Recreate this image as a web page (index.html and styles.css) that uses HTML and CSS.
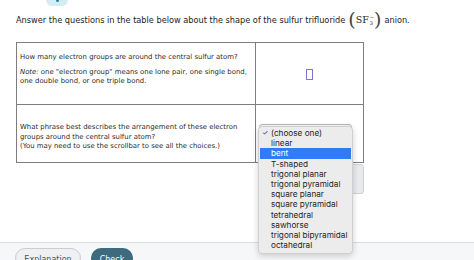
FILE: index.html
```html
<!DOCTYPE html>
<html lang="en">

<head>
    <meta charset="UTF-8">
    <title>Electron groups</title>
    <link rel="stylesheet" href="styles.css">
</head>

<body>
    <div class="tab"><span class="dot"></span></div>

    <main>
        <p class="question">Answer the questions in the table below about the shape of the sulfur trifluoride
            <span class="formula"><span class="paren">(</span>SF<span class="sub-sup"><sup>&minus;</sup><sub>3</sub></span><span class="paren">)</span></span>
            anion.</p>

        <table class="qtable">
            <tr class="row-one">
                <td class="ask">
                    <p>How many electron groups are around the central sulfur atom?</p>
                    <p class="note"><em>Note:</em> one "electron group" means one lone pair, one single bond, one double bond, or one triple bond.</p>
                </td>
                <td class="answer"><span class="input-box"></span></td>
            </tr>
            <tr class="row-two">
                <td class="ask">
                    <p>What phrase best describes the arrangement of these electron groups around the central sulfur atom?<br>(You may need to use the scrollbar to see all the choices.)</p>
                </td>
                <td class="answer select-cell">
                    <div class="select"><span class="arrows">&#8597;</span></div>
                    <ul class="popup">
                        <li class="checked">(choose one)</li>
                        <li>linear</li>
                        <li class="active">bent</li>
                        <li>T-shaped</li>
                        <li>trigonal planar</li>
                        <li>trigonal pyramidal</li>
                        <li>square planar</li>
                        <li>square pyramidal</li>
                        <li>tetrahedral</li>
                        <li>sawhorse</li>
                        <li>trigonal bipyramidal</li>
                        <li>octahedral</li>
                    </ul>
                </td>
            </tr>
        </table>

        <div class="tools"><div class="tool-box"></div></div>
    </main>

    <footer>
        <button class="btn explain">Explanation</button>
        <button class="btn check">Check</button>
    </footer>
</body>

</html>
```

FILE: styles.css
```css
* {
    margin: 0;
    padding: 0;
    box-sizing: border-box;
}

body {
    width: 474px;
    height: 260px;
    overflow: hidden;
    background-color: white;
    font-family: "DejaVu Sans", Verdana, sans-serif;
    color: #2b2b2b;
    position: relative;
}

.tab {
    position: absolute;
    left: 46px;
    top: -6px;
    width: 22px;
    height: 12px;
    border-radius: 6px;
    background-color: #d6ecf3;
    display: flex;
    justify-content: center;
    align-items: flex-end;
    padding-bottom: 4px;
}

.tab .dot {
    width: 3px;
    height: 3px;
    border-radius: 50%;
    background-color: #2c8aa8;
}

main {
    height: 242px;
    padding: 10px 0 0 16px;
}

.question {
    font-size: 8.2px;
    display: flex;
    align-items: center;
    gap: 3px;
    height: 19px;
    white-space: nowrap;
    color: #222;
}

.formula {
    font-family: "DejaVu Serif", "Liberation Serif", serif;
    font-size: 9.5px;
    display: inline-flex;
    align-items: center;
}

.formula .paren {
    font-size: 19px;
    font-weight: 300;
    color: #444;
    line-height: 1;
}

.sub-sup {
    display: inline-flex;
    flex-direction: column;
    font-size: 6px;
    line-height: 6px;
    margin-left: 1px;
}

.qtable {
    margin-top: 13px;
    border-collapse: collapse;
    width: 348px;
    font-size: 6.9px;
}

.qtable td {
    border: 1px solid #7d7d7d;
    vertical-align: top;
}

.row-one td {
    height: 62px;
}

.row-two td {
    height: 58px;
}

.ask {
    width: 239px;
    padding: 10px 6px 0 3px;
    line-height: 9.5px;
}

.row-two .ask {
    padding-top: 18px;
}

.note {
    margin-top: 5px;
}

.answer {
    position: relative;
}

.row-one .answer {
    text-align: center;
    vertical-align: middle;
}

.input-box {
    display: inline-block;
    width: 7px;
    height: 11px;
    border: 1px solid #7a74dc;
    margin-top: 3px;
}

.select {
    position: absolute;
    left: 3px;
    top: 19px;
    width: 93px;
    height: 15px;
    border: 1px solid #b8b8b8;
    border-radius: 3px;
    background-color: #f7f7f7;
}

.arrows {
    position: absolute;
    right: 1px;
    top: 2px;
    font-size: 7px;
    color: #555;
}

.popup {
    position: absolute;
    left: 2px;
    top: 21px;
    width: 95px;
    padding: 1px 1px 3px;
    list-style: none;
    background-color: #ececec;
    border: 1px solid #d0d0d0;
    border-radius: 4px;
    box-shadow: 0 2px 6px rgba(0, 0, 0, 0.18);
    font-family: Inter, "Liberation Sans", sans-serif;
    font-size: 8.2px;
    color: #262626;
    z-index: 2;
}

.popup li {
    height: 10.2px;
    line-height: 10.2px;
    padding-left: 11px;
    position: relative;
    white-space: nowrap;
}

.popup li.checked::before {
    content: "\2713";
    position: absolute;
    left: 2px;
    font-size: 7px;
}

.popup li.active {
    background-color: #2f7cf6;
    color: white;
}

.tools {
    display: flex;
    justify-content: flex-end;
    width: 348px;
    margin-top: 1px;
}

.tool-box {
    width: 40px;
    height: 30px;
    border: 1px solid #cfd3d6;
    border-radius: 3px;
    background-color: #e8ebed;
}

footer {
    height: 18px;
    border-top: 1px solid #d9dcdf;
    background-color: #f6f7f8;
    display: flex;
    gap: 10px;
    padding: 5px 0 0 15px;
}

.btn {
    height: 20px;
    border-radius: 10px;
    font-family: "DejaVu Sans", sans-serif;
    font-size: 8px;
    padding: 2px 0 0;
}

.explain {
    width: 66px;
    border: 1px solid #c9ced2;
    background-color: #eef0f2;
    color: #3c5866;
}

.check {
    width: 42px;
    border: none;
    background-color: #3d6a7c;
    color: white;
}
```
